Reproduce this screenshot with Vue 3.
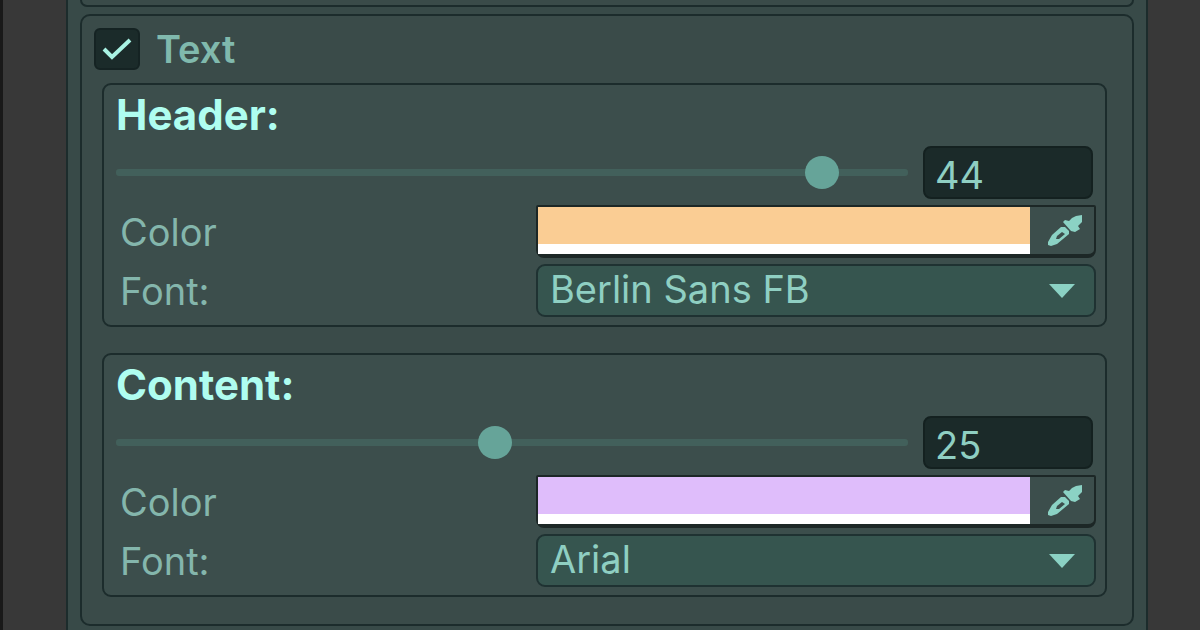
<template>
  <div class="window">
    <main class="panel">
      <!-- Bottom of the previous section -->
      <div class="section section-previous"></div>

      <!-- Text Section -->
      <section class="section">
        <label class="section-toggle">
          <span class="checkbox-wrapper">
            <input type="checkbox" v-model="textEnabled" class="checkbox">
            <svg v-if="textEnabled" class="check-icon" viewBox="0 0 46 42" aria-hidden="true">
              <path d="M10 21 L18 29 L36 12" fill="none" stroke="currentColor" stroke-width="4" />
            </svg>
          </span>
          <span>Text</span>
        </label>

        <div v-for="group in groups" :key="group.id" class="group">
          <h2>{{ group.title }}:</h2>

          <!-- Size -->
          <div class="size-row">
            <input
              type="range"
              v-model.number="group.size"
              min="4"
              max="48"
              class="slider"
              :aria-label="group.title + ' size'"
            >
            <input
              type="number"
              v-model.number="group.size"
              min="4"
              max="48"
              class="number-input"
              :aria-label="group.title + ' size value'"
            >
          </div>

          <!-- Color -->
          <div class="field-row">
            <label :for="group.id + '-color'" class="field-label">Color</label>
            <div class="color-field">
              <div class="swatch">
                <input type="color" v-model="group.color" :id="group.id + '-color'" class="color-input">
                <div class="alpha-bar"></div>
              </div>
              <button type="button" class="picker-button" aria-label="Pick color" @click="pickColor(group)">
                <svg width="36" height="34" viewBox="0 0 36 34" aria-hidden="true">
                  <path
                    d="M25 4 L29 2 L35 1 L35 8 L31 12 L33 15 L28 18 L24 17 L16 8 L18 6 L22 7 Z"
                    fill="currentColor"
                  />
                  <path
                    fill-rule="evenodd"
                    d="M14 13 L18 13 L22 17 L22 20 L10 30 L4 32 L1 31 L1 28 L5 21 Z M15 18 L10 22 L9 25 L12 25 L18 20 Z"
                    fill="currentColor"
                  />
                </svg>
              </button>
            </div>
          </div>

          <!-- Font -->
          <div class="field-row">
            <label :for="group.id + '-font'" class="field-label">Font:</label>
            <div class="select-wrapper">
              <select v-model="group.font" :id="group.id + '-font'" class="select">
                <option v-for="font in fonts" :key="font" :value="font">{{ font }}</option>
              </select>
              <svg class="arrow-icon" width="26" height="14" viewBox="0 0 26 14" aria-hidden="true">
                <path d="M0 0 H26 L13 14 Z" fill="currentColor" />
              </svg>
            </div>
          </div>
        </div>
      </section>
    </main>
  </div>
</template>

<script setup>
import { ref } from 'vue'

const fonts = ['Berlin Sans FB', 'Arial']

const textEnabled = ref(true)
const groups = ref([
  { id: 'header', title: 'Header', size: 44, color: '#facd94', font: 'Berlin Sans FB' },
  { id: 'content', title: 'Content', size: 25, color: '#dfbdfb', font: 'Arial' }
])

const pickColor = async (group) => {
  if (!window.EyeDropper) return
  try {
    const result = await new window.EyeDropper().open()
    group.color = result.sRGBHex
  } catch {
    // picking was cancelled
  }
}
</script>

<style>
body {
  margin: 0;
  background: #383838;
}
</style>

<style scoped>
.window,
.window * {
  box-sizing: border-box;
}

.window {
  min-height: 100vh;
  padding: 0 52px 0 63px;
  border-left: 3px solid #191919;
  background: #383838;
  color: #80b9ad;
  font-family: Inter, "Liberation Sans", sans-serif;
  font-size: 38px;
}

.window input,
.window select,
.window button {
  margin: 0;
  font: inherit;
  color: inherit;
}

.panel {
  min-height: 100vh;
  padding: 0 12px;
  border: solid #1c2c2c;
  border-width: 0 2px;
  background: #384a48;
}

/* Sections */
.section {
  padding: 12px 25px 27px 12px;
  border: 2px solid #1c2c2c;
  border-radius: 10px;
  background: #3a4b49;
}

.section-previous {
  height: 7px;
  margin-bottom: 7px;
  padding: 0;
  border-top: none;
  border-radius: 0 0 8px 8px;
}

.section-toggle {
  display: flex;
  align-items: center;
  gap: 16px;
  height: 42px;
  margin-bottom: 13px;
  font-weight: 600;
}

.checkbox-wrapper {
  display: grid;
  width: 46px;
  height: 42px;
}

.checkbox,
.check-icon {
  grid-area: 1 / 1;
  width: 46px;
  height: 42px;
}

.checkbox {
  appearance: none;
  border: 2px solid #152323;
  border-radius: 6px;
  background: #1b2b2a;
}

.check-icon {
  color: #a9f3e4;
  pointer-events: none;
}

/* Groups */
.group {
  display: flex;
  flex-direction: column;
  gap: 6px;
  margin-left: 8px;
  padding: 0 9px 8px 12px;
  border: 2px solid #1c2c2c;
  border-radius: 9px;
  background: #3c4e4c;
}

.group + .group {
  margin-top: 26px;
}

.group h2 {
  margin: 0;
  padding-top: 5px;
  font-size: 42px;
  font-weight: 700;
  line-height: 50px;
  color: #affdf0;
}

/* Size */
.size-row {
  display: flex;
  align-items: center;
  gap: 15px;
  padding-right: 3px;
}

.slider {
  flex: 1;
  min-width: 0;
  height: 34px;
  appearance: none;
  background: transparent;
}

.slider::-webkit-slider-runnable-track {
  height: 7px;
  border-radius: 3px;
  background: #42605b;
}

.slider::-webkit-slider-thumb {
  appearance: none;
  width: 34px;
  height: 33px;
  margin-top: -13px;
  border-radius: 50%;
  background: #66a499;
}

.number-input {
  width: 170px;
  height: 53px;
  padding: 4px 10px 0;
  border: 2px solid #142120;
  border-radius: 8px;
  background: #1b2a29;
  appearance: textfield;
}

.number-input::-webkit-inner-spin-button {
  appearance: none;
}

/* Fields */
.field-row {
  display: grid;
  grid-template-columns: 3fr 4fr;
  align-items: center;
}

.field-label {
  padding-left: 4px;
  color: #84b6ac;
}

.color-field {
  display: flex;
  height: 53px;
  border: 2px solid #1c2726;
  border-bottom-width: 4px;
  border-radius: 2px 2px 8px 8px;
}

.swatch {
  display: flex;
  flex: 1;
  flex-direction: column;
}

.window .color-input {
  display: block;
  flex: 1;
  width: 100%;
  min-height: 0;
  padding: 0;
  border: none;
  background: none;
  appearance: none;
}

.color-input::-webkit-color-swatch-wrapper {
  padding: 0;
}

.color-input::-webkit-color-swatch {
  border: none;
  border-radius: 0;
}

.alpha-bar {
  height: 10px;
  background: #ffffff;
}

.picker-button {
  display: flex;
  align-items: center;
  justify-content: center;
  width: 64px;
  padding: 0 0 0 6px;
  border: none;
  background: none;
}

.picker-button svg,
.arrow-icon {
  color: #8bd2c4;
}

.select-wrapper {
  position: relative;
}

.select {
  display: block;
  width: 100%;
  height: 53px;
  padding: 0 60px 4px 12px;
  border: 2px solid #1f3232;
  border-radius: 9px;
  background: #36554f;
  appearance: none;
}

.window .select,
.window .number-input {
  color: #8fcfc2;
}

.arrow-icon {
  position: absolute;
  top: 20px;
  right: 21px;
  pointer-events: none;
}
</style>
